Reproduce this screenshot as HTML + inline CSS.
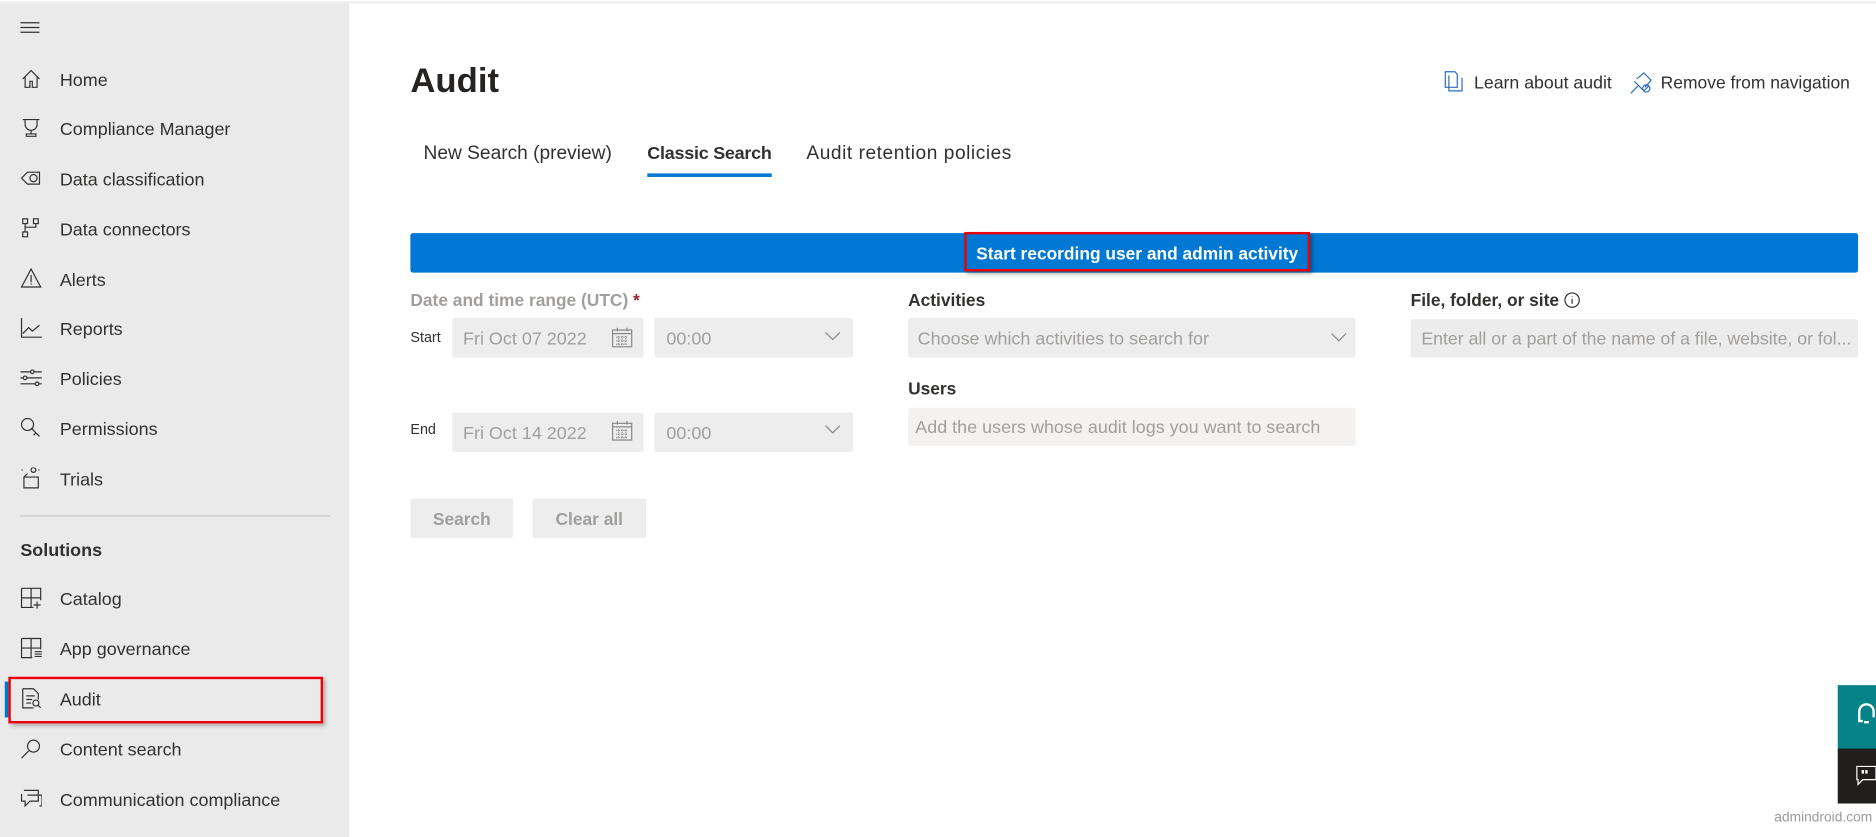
<!DOCTYPE html>
<html><head><meta charset="utf-8"><style>
html,body{margin:0;padding:0;width:1876px;height:837px;overflow:hidden;background:#fff;}
#w{position:absolute;left:0;top:0;width:1568px;height:700px;transform:scale(1.19643,1.19571);transform-origin:0 0;font-family:"Segoe UI","Liberation Sans",sans-serif;color:#323130;}
.a{position:absolute;white-space:nowrap;}
.side{position:absolute;left:0;top:3px;width:292px;height:697px;background:#eaeaea;}
.nav{position:absolute;left:50px;font-size:15px;color:#323130;line-height:20px;margin-top:2px;}
.ic{position:absolute;left:17px;width:18px;height:18px;}
.box{position:absolute;background:#ededed;border-radius:2px;}
.ph{position:absolute;font-size:15px;color:#a19f9d;line-height:20px;}
.lbl{position:absolute;font-size:14.5px;font-weight:600;line-height:20px;margin-top:1px;}
</style></head><body><div id="w">
<div class="a" style="left:0;top:1px;width:1568px;height:2px;background:#eeeeee"></div>
<div class="side"></div>
<svg class="a" style="left:17px;top:17px" width="18" height="14"><path d="M0 2h16M0 6h16M0 10h16" stroke="#323130" stroke-width="1"/></svg>

<svg class="ic" style="top:57px" viewBox="0 0 18 18" fill="none" stroke="#323130"><path d="M2 9L9 2l7 7M4 7v9h4v-5h2v5h4V7"/></svg>
<div class="nav" style="top:56px">Home</div>
<svg class="ic" style="top:98px" viewBox="0 0 18 18" fill="none" stroke="#323130"><path d="M4 2h10v4a5 5 0 0 1-10 0zM2 2h2v3M16 2h-2v3M9 11v3M5 14h8v2H5z"/></svg>
<div class="nav" style="top:97px">Compliance Manager</div>
<svg class="ic" style="top:140px" viewBox="0 0 18 18" fill="none" stroke="#323130"><path d="M1 9l5-5h10v10H6z"/><circle cx="11" cy="9" r="3"/></svg>
<div class="nav" style="top:139px">Data classification</div>
<svg class="ic" style="top:182px" viewBox="0 0 18 18" fill="none" stroke="#323130"><rect x="2" y="1" width="4" height="4"/><rect x="11" y="1" width="4" height="4"/><rect x="2" y="12" width="4" height="4"/><path d="M4 5v7M4 8h9V5"/></svg>
<div class="nav" style="top:181px">Data connectors</div>
<svg class="ic" style="top:224px" viewBox="0 0 18 18" fill="none" stroke="#323130"><path d="M9 1L1 16h16zM9 6v6M9 13v1"/></svg>
<div class="nav" style="top:223px">Alerts</div>
<svg class="ic" style="top:265px" viewBox="0 0 18 18" fill="none" stroke="#323130"><path d="M1 1v16h17M2 14l5-5 3 3 6-5"/></svg>
<div class="nav" style="top:264px">Reports</div>
<svg class="ic" style="top:307px" viewBox="0 0 18 18" fill="none" stroke="#323130"><path d="M0 4h18M0 9h18M0 14h18"/><circle cx="10" cy="4" r="1.5" fill="#eaeaea"/><circle cx="4" cy="9" r="1.5" fill="#eaeaea"/><circle cx="14" cy="14" r="1.5" fill="#eaeaea"/></svg>
<div class="nav" style="top:306px">Policies</div>
<svg class="ic" style="top:349px" viewBox="0 0 18 18" fill="none" stroke="#323130"><circle cx="6" cy="6" r="5"/><path d="M9 9l7 7M13 13l-2 2"/></svg>
<div class="nav" style="top:348px">Permissions</div>
<svg class="ic" style="top:391px" viewBox="0 0 18 18" fill="none" stroke="#323130"><path d="M3 8h12v9H3zM3 8l3-3M1 2h1M9 2a2 2 0 1 1 0 .1M15 2h1"/></svg>
<div class="nav" style="top:390px">Trials</div>

<div class="a" style="left:17px;top:431px;width:259px;height:1px;background:#c8c6c4"></div>
<div class="nav" style="left:17px;top:449px;font-weight:600">Solutions</div>

<svg class="ic" style="top:491px" viewBox="0 0 18 18" fill="none" stroke="#323130"><path d="M1 1h16v10M1 1v16h10M9 1v16M1 9h16M14 12v6M11 15h6"/></svg>
<div class="nav" style="top:490px">Catalog</div>
<svg class="ic" style="top:533px" viewBox="0 0 18 18" fill="none" stroke="#323130"><path d="M1 1h16v9M1 1v16h9M9 1v16M1 9h16M12 12h6M12 14h6M12 16h6"/></svg>
<div class="nav" style="top:532px">App governance</div>
<div class="a" style="left:4px;top:570px;width:3px;height:30px;background:#0078d4"></div>
<svg class="ic" style="top:575px" viewBox="0 0 18 18" fill="none" stroke="#323130"><path d="M2 1h9l4 4v5M2 1v16h9M5 7h7M5 10h5M5 13h4"/><circle cx="13" cy="13" r="2.5"/><path d="M15 15l2 2"/></svg>
<div class="nav" style="top:574px">Audit</div>
<div class="a" style="left:7px;top:566px;width:259px;height:35px;border:2px solid #e00;box-shadow:2px 2px 3px rgba(0,0,0,.25)"></div>
<svg class="ic" style="top:617px" viewBox="0 0 18 18" fill="none" stroke="#323130"><circle cx="11" cy="7" r="5"/><path d="M7 11l-6 6"/></svg>
<div class="nav" style="top:616px">Content search</div>
<svg class="ic" style="top:659px" viewBox="0 0 18 18" fill="none" stroke="#323130"><path d="M3 2h12v9H8l-4 4v-4H1V5M6 6h12v9h-2"/></svg>
<div class="nav" style="top:658px">Communication compliance</div>

<div class="a" style="left:343px;top:48px;font-size:29px;font-weight:700;color:#252423;line-height:40px">Audit</div>
<svg class="a" style="left:1207px;top:59px" width="16" height="18" viewBox="0 0 16 18" fill="none" stroke="#2a6ebb"><path d="M1 1h8l2 2v11H1z"/><path d="M4 4v13h11V6"/></svg>
<div class="a" style="left:1232px;top:60px;font-size:14.8px;line-height:20px">Learn about audit</div>
<svg class="a" style="left:1362px;top:59px" width="20" height="20" viewBox="0 0 20 20" fill="none" stroke="#2a6ebb"><path d="M1 19l6-6M4 9l7 7M6 7l6-5 6 6-5 6"/><circle cx="14" cy="15" r="3"/><path d="M12 17l4-4"/></svg>
<div class="a" style="left:1388px;top:60px;font-size:14.6px;line-height:20px">Remove from navigation</div>

<div class="a" style="left:354px;top:119px;font-size:16px;line-height:20px">New Search (preview)</div>
<div class="a" style="left:541px;top:119px;font-size:15px;line-height:20px;font-weight:600;letter-spacing:-0.2px">Classic Search</div>
<div class="a" style="left:541px;top:145px;width:104px;height:3px;background:#0078d4"></div>
<div class="a" style="left:674px;top:119px;font-size:16px;line-height:20px;letter-spacing:0.45px">Audit retention policies</div>

<div class="a" style="left:343px;top:195px;width:1210px;height:33px;background:#0078d4;border-radius:2px"></div>
<div class="a" style="left:806px;top:194px;width:285px;height:29px;border:2px solid #e00;box-shadow:2px 2px 3px rgba(0,0,0,.3)"></div>
<div class="a" style="left:806px;top:203px;width:289px;text-align:center;color:#fff;font-size:14.5px;font-weight:600;line-height:20px">Start recording user and admin activity</div>

<div class="lbl" style="left:343px;top:241px;color:#a19f9d">Date and time range (UTC) <span style="color:#a4262c">*</span></div>
<div class="lbl" style="left:759px;top:241px">Activities</div>
<div class="lbl" style="left:1179px;top:241px">File, folder, or site <svg width="14" height="14" style="vertical-align:-2px" fill="none" stroke="#323130"><circle cx="7" cy="7" r="6"/><path d="M7 6v4M7 4v.5"/></svg></div>

<div class="a" style="left:343px;top:274px;font-size:12px;line-height:16px">Start</div>
<div class="box" style="left:378px;top:266px;width:160px;height:33px"></div>
<div class="ph" style="left:387px;top:274px">Fri Oct 07 2022</div>
<svg class="a" style="left:511px;top:274px" width="18" height="17" viewBox="0 0 18 17" fill="none" stroke="#8a8886"><rect x="1" y="2" width="16" height="14"/><path d="M1 5h16M5 0v3M13 0v3" /><path d="M4 8h10M4 11h10M4 14h10M6 7v8M9 7v8M12 7v8" stroke-dasharray="1 1"/></svg>
<div class="box" style="left:547px;top:266px;width:166px;height:33px"></div>
<div class="ph" style="left:557px;top:274px">00:00</div>
<svg class="a" style="left:689px;top:277px" width="14" height="8" fill="none" stroke="#8a8886"><path d="M1 1l6 6 6-6"/></svg>

<div class="box" style="left:759px;top:266px;width:374px;height:33px"></div>
<div class="ph" style="left:767px;top:274px">Choose which activities to search for</div>
<svg class="a" style="left:1112px;top:278px" width="14" height="8" fill="none" stroke="#8a8886"><path d="M1 1l6 6 6-6"/></svg>

<div class="box" style="left:1179px;top:267px;width:374px;height:32px;background:#ececec"></div>
<div class="ph" style="left:1188px;top:274px;font-size:14.8px">Enter all or a part of the name of a file, website, or fol...</div>

<div class="lbl" style="left:759px;top:315px">Users</div>
<div class="box" style="left:759px;top:341px;width:374px;height:32px;background:#f3f2f1"></div>
<div class="ph" style="left:765px;top:348px">Add the users whose audit logs you want to search</div>

<div class="a" style="left:343px;top:351px;font-size:12px;line-height:16px">End</div>
<div class="box" style="left:378px;top:345px;width:160px;height:33px"></div>
<div class="ph" style="left:387px;top:353px">Fri Oct 14 2022</div>
<svg class="a" style="left:511px;top:352px" width="18" height="17" viewBox="0 0 18 17" fill="none" stroke="#8a8886"><rect x="1" y="2" width="16" height="14"/><path d="M1 5h16M5 0v3M13 0v3" /><path d="M4 8h10M4 11h10M4 14h10M6 7v8M9 7v8M12 7v8" stroke-dasharray="1 1"/></svg>
<div class="box" style="left:547px;top:345px;width:166px;height:33px"></div>
<div class="ph" style="left:557px;top:353px">00:00</div>
<svg class="a" style="left:689px;top:355px" width="14" height="8" fill="none" stroke="#8a8886"><path d="M1 1l6 6 6-6"/></svg>

<div class="box" style="left:343px;top:417px;width:86px;height:33px"></div>
<div class="a" style="left:343px;top:425px;width:86px;text-align:center;color:#a19f9d;font-size:14.5px;font-weight:600;line-height:20px">Search</div>
<div class="box" style="left:445px;top:417px;width:95px;height:33px"></div>
<div class="a" style="left:445px;top:425px;width:95px;text-align:center;color:#a19f9d;font-size:14.5px;font-weight:600;line-height:20px">Clear all</div>

<div class="a" style="left:1536px;top:573px;width:32px;height:53px;background:#038387"></div>
<svg class="a" style="left:1552px;top:588px" width="16" height="20" fill="none" stroke="#fff" stroke-width="2"><path d="M2 12V7a6 6 0 0 1 12 0v5"/><path d="M2 12v3h3M6 16h4"/></svg>
<div class="a" style="left:1536px;top:626px;width:32px;height:46px;background:#201f1e"></div>
<svg class="a" style="left:1551px;top:640px" width="17" height="17" fill="none" stroke="#fff"><path d="M1 1h16v11H6l-4 4V12H1z"/><path d="M6 4v3M9 4v3" stroke-width="2"/></svg>
<div class="a" style="left:1483px;top:676px;font-size:11.5px;color:#9a9a9a;letter-spacing:0;line-height:16px">admindroid.com</div>
</div></body></html>
